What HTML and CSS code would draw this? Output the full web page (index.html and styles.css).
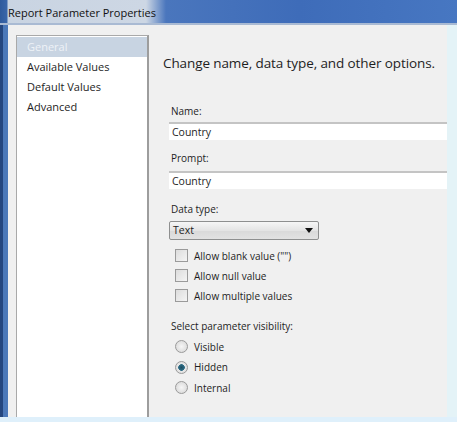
FILE: index.html
```html
<!DOCTYPE html>
<html>
<head>
<meta charset="utf-8">
<link rel="stylesheet" href="styles.css">
</head>
<body>
<div class="window">
  <div class="titlebar"><span class="title">Report Parameter Properties</span></div>
  <div class="frame">
    <div class="client">
      <div class="nav">
        <div class="nav-item selected">General</div>
        <div class="nav-item">Available Values</div>
        <div class="nav-item">Default Values</div>
        <div class="nav-item">Advanced</div>
      </div>
      <div class="page">
        <div class="heading">Change name, data type, and other options.</div>
        <div class="form">
          <div class="label">Name:</div>
          <div class="textbox">Country</div>
          <div class="label prompt">Prompt:</div>
          <div class="textbox second">Country</div>
          <div class="label type">Data type:</div>
          <div class="select"><span>Text</span><span class="arrow"></span></div>
          <div class="checks">
            <div class="opt"><span class="check"></span><span>Allow blank value ("")</span></div>
            <div class="opt"><span class="check"></span><span>Allow null value</span></div>
            <div class="opt"><span class="check"></span><span>Allow multiple values</span></div>
          </div>
          <div class="label vis">Select parameter visibility:</div>
          <div class="checks radios">
            <div class="opt"><span class="radio"></span><span>Visible</span></div>
            <div class="opt"><span class="radio on"></span><span>Hidden</span></div>
            <div class="opt"><span class="radio"></span><span>Internal</span></div>
          </div>
        </div>
      </div>
    </div>
  </div>
  <div class="bottom"></div>
</div>
</body>
</html>
```
FILE: styles.css
```css
html, body {
  margin: 0;
  padding: 0;
  width: 457px;
  height: 422px;
  overflow: hidden;
  background: #f0f0f0;
  font-family: "Open Sans", "Noto Sans", sans-serif;
  color: #1e1e1e;
}
.window {
  width: 457px;
  height: 422px;
  display: flex;
  flex-direction: column;
}
.titlebar {
  flex: none;
  background: linear-gradient(to right, #2f5a9c 0, #3a66aa 7px, #c9d4e2 8px, #cdd7e4 146px, #4a76bd 166px, #3e6cb9 300px, #4777c2 457px);
  border-bottom: 2px solid #a9bad3;
  display: flex;
  align-items: center;
  padding-top: 2px;
  box-sizing: border-box;
  height: 25px;
}
.title {
  padding-left: 8px;
  font-size: 11px;
  color: #111;
}
.frame {
  flex: 1;
  display: flex;
  border-left: 3px solid #24467f;
  min-height: 0;
}
.client {
  flex: 1;
  display: flex;
  border-left: 5px solid #4b78b9;
  border-right: 10px solid #e4f3f7;
  background: #f0f0f0;
  padding: 10px 0 0 8px;
  min-height: 0;
}
.nav {
  width: 130px;
  background: #fff;
  border-left: 1px solid #a9a9a9;
  border-top: 1px solid #a9a9a9;
  border-right: 2px solid #9d9d9d;
  padding-top: 1px;
  font-size: 11px;
  flex: none;
}
.nav-item {
  height: 20px;
  line-height: 20px;
  padding-left: 10px;
}
.nav-item.selected {
  background: #c8d4e2;
  color: #eef2f7;
}
.page {
  flex: 1;
  padding-left: 14px;
  padding-top: 17px;
  min-width: 0;
}
.heading {
  font-size: 13.5px;
  letter-spacing: -0.1px;
  white-space: nowrap;
  color: #1e1e1e;
  line-height: 22px;
}
.form {
  padding-left: 6px;
  padding-top: 30px;
}
.label {
  font-size: 10px;
  line-height: 14px;
  padding-left: 2px;
  margin-bottom: 4px;
}
.label.prompt {
  margin-bottom: 6px;
}
.label.type {
  margin-bottom: 5px;
}
.label.vis {
  margin-bottom: 7px;
}
.textbox {
  background: #fff;
  border-top: 2px solid #c4c4c4;
  height: 16px;
  line-height: 16px;
  font-size: 10.5px;
  padding-left: 3px;
  margin-bottom: 11px;
}
.textbox.second {
  margin-bottom: 13px;
}
.select {
  width: 145px;
  height: 17px;
  border: 1px solid #8e8f8f;
  border-radius: 2px;
  background: linear-gradient(#f6f6f6, #e4e4e4 50%, #d9d9d9 51%, #e2e2e2);
  font-size: 10.5px;
  line-height: 17px;
  padding-left: 3px;
  display: flex;
  justify-content: space-between;
  align-items: center;
  margin-bottom: 9px;
}
.arrow {
  width: 0;
  height: 0;
  border-left: 4px solid transparent;
  border-right: 4px solid transparent;
  border-top: 5px solid #111;
  margin-right: 5px;
}
.checks {
  padding-left: 6px;
  display: flex;
  flex-direction: column;
  gap: 7px;
  margin-bottom: 17px;
}
.checks.radios {
  gap: 7.5px;
}
.opt {
  display: flex;
  align-items: center;
  gap: 6px;
  font-size: 10px;
  height: 13px;
}
.check {
  width: 11px;
  height: 11px;
  border: 1px solid #9a9a9a;
  background: linear-gradient(135deg, #dcdcdc, #f4f4f4);
  flex: none;
}
.radio {
  width: 11px;
  height: 11px;
  border: 1px solid #9a9a9a;
  border-radius: 50%;
  background: radial-gradient(circle at 50% 50%, #f6f6f6, #d4d4d4);
  flex: none;
}
.radio.on {
  background: radial-gradient(circle at 50% 50%, #1d4d61 0, #2f6d86 3px, #e8e8e8 3.6px, #d8d8d8);
}
.bottom {
  height: 5px;
  flex: none;
  background: #dff0fb;
}
```
